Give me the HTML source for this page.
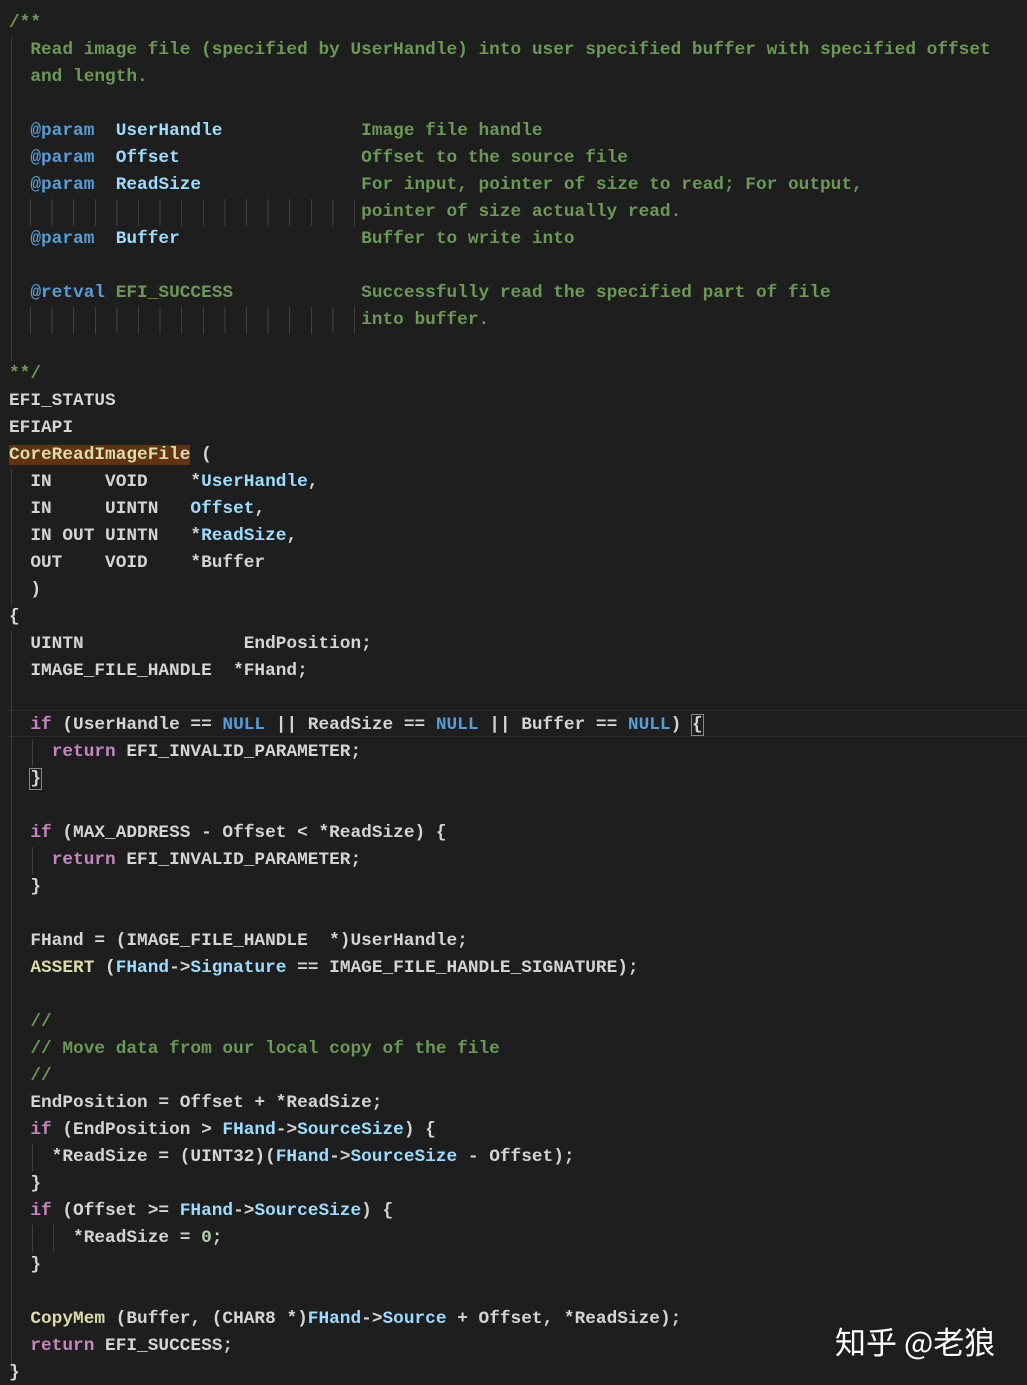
<!DOCTYPE html>
<html><head><meta charset="utf-8"><style>
html,body{margin:0;padding:0;background:#1e1e1e;width:1027px;height:1385px;overflow:hidden;position:relative}
pre{position:absolute;left:9px;top:10px;margin:0;font-family:"Liberation Mono",monospace;font-size:17.8px;line-height:27px;font-weight:bold;color:#d4d4d4;z-index:2}
.c{color:#6a9955}.k{color:#569cd6}.v{color:#9cdcfe}.p{color:#c586c0}.f{color:#dcdcaa}.n{color:#b5cea8}
.hl{background:#613214;color:#dcdcaa}
.g{position:absolute;width:1px;background:#404040;z-index:1}
.tg{position:absolute;left:30px;width:330px;height:27px;background:repeating-linear-gradient(90deg,#404040 0 1px,transparent 1px 21.6px);z-index:1}
.box{outline:1px solid #888;}
.wm{position:absolute;left:835px;top:1318px;font-family:"Noto Sans CJK SC",sans-serif;font-size:31px;color:#fff;z-index:3}
.cur{position:absolute;left:9px;right:0;top:710px;height:25px;border-top:1px solid #2c2c2c;border-bottom:1px solid #2c2c2c}
</style></head><body>
<div class="g" style="left:11px;top:37px;height:324px"></div>
<div class="g" style="left:11px;top:469px;height:135px"></div>
<div class="g" style="left:11px;top:631px;height:740px"></div>
<div class="g" style="left:32px;top:739px;height:27px"></div>
<div class="g" style="left:32px;top:847px;height:27px"></div>
<div class="g" style="left:32px;top:1144px;height:27px"></div>
<div class="g" style="left:32px;top:1225px;height:27px"></div>
<div class="g" style="left:53px;top:1225px;height:27px"></div>
<div class="tg" style="top:199px"></div>
<div class="tg" style="top:307px"></div>
<div class="cur"></div>
<pre><span class="c">/**</span>
<span class="c">  Read image file (specified by UserHandle) into user specified buffer with specified offset</span>
<span class="c">  and length.</span>

  <span class="k">@param</span>  <span class="v">UserHandle</span>             <span class="c">Image file handle</span>
  <span class="k">@param</span>  <span class="v">Offset</span>                 <span class="c">Offset to the source file</span>
  <span class="k">@param</span>  <span class="v">ReadSize</span>               <span class="c">For input, pointer of size to read; For output,</span>
                                 <span class="c">pointer of size actually read.</span>
  <span class="k">@param</span>  <span class="v">Buffer</span>                 <span class="c">Buffer to write into</span>

  <span class="k">@retval</span> <span class="c">EFI_SUCCESS</span>            <span class="c">Successfully read the specified part of file</span>
                                 <span class="c">into buffer.</span>

<span class="c">**/</span>
EFI_STATUS
EFIAPI
<span class="hl">CoreReadImageFile</span> (
  IN     VOID    *<span class="v">UserHandle</span>,
  IN     UINTN   <span class="v">Offset</span>,
  IN OUT UINTN   *<span class="v">ReadSize</span>,
  OUT    VOID    *Buffer
  )
{
  UINTN               EndPosition;
  IMAGE_FILE_HANDLE  *FHand;

  <span class="p">if</span> (UserHandle == <span class="k">NULL</span> || ReadSize == <span class="k">NULL</span> || Buffer == <span class="k">NULL</span>) <span class="box">{</span>
    <span class="p">return</span> EFI_INVALID_PARAMETER;
  <span class="box">}</span>

  <span class="p">if</span> (MAX_ADDRESS - Offset &lt; *ReadSize) {
    <span class="p">return</span> EFI_INVALID_PARAMETER;
  }

  FHand = (IMAGE_FILE_HANDLE  *)UserHandle;
  <span class="f">ASSERT</span> (<span class="v">FHand</span>-&gt;<span class="v">Signature</span> == IMAGE_FILE_HANDLE_SIGNATURE);

  <span class="c">//</span>
  <span class="c">// Move data from our local copy of the file</span>
  <span class="c">//</span>
  EndPosition = Offset + *ReadSize;
  <span class="p">if</span> (EndPosition &gt; <span class="v">FHand</span>-&gt;<span class="v">SourceSize</span>) {
    *ReadSize = (UINT32)(<span class="v">FHand</span>-&gt;<span class="v">SourceSize</span> - Offset);
  }
  <span class="p">if</span> (Offset &gt;= <span class="v">FHand</span>-&gt;<span class="v">SourceSize</span>) {
      *ReadSize = <span class="n">0</span>;
  }

  <span class="f">CopyMem</span> (Buffer, (CHAR8 *)<span class="v">FHand</span>-&gt;<span class="v">Source</span> + Offset, *ReadSize);
  <span class="p">return</span> EFI_SUCCESS;
}</pre>
<div class="wm">知乎 @老狼</div>
</body></html>
